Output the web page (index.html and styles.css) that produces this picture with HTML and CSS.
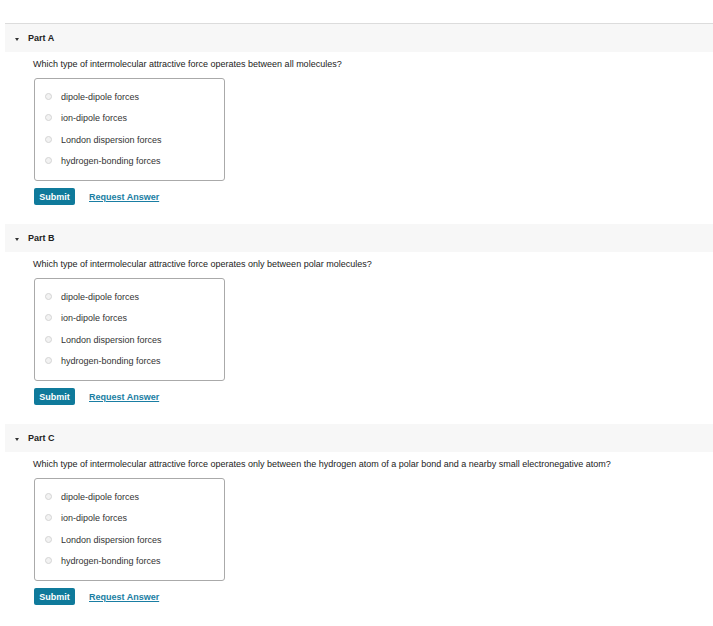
FILE: index.html
```html
<!DOCTYPE html>
<html>
<head>
<meta charset="utf-8">
<link rel="stylesheet" href="styles.css">
</head>
<body>
<div class="parts">
  <section class="part">
    <div class="part-head"><span class="caret"></span><span class="part-title">Part A</span></div>
    <div class="part-body">
      <p class="question">Which type of intermolecular attractive force operates between all molecules?</p>
      <div class="choices">
        <label class="choice"><span class="radio"></span>dipole-dipole forces</label>
        <label class="choice"><span class="radio"></span>ion-dipole forces</label>
        <label class="choice"><span class="radio"></span>London dispersion forces</label>
        <label class="choice"><span class="radio"></span>hydrogen-bonding forces</label>
      </div>
      <div class="actions"><button class="submit">Submit</button><a class="request" href="#">Request Answer</a></div>
    </div>
  </section>
  <section class="part">
    <div class="part-head"><span class="caret"></span><span class="part-title">Part B</span></div>
    <div class="part-body">
      <p class="question">Which type of intermolecular attractive force operates only between polar molecules?</p>
      <div class="choices">
        <label class="choice"><span class="radio"></span>dipole-dipole forces</label>
        <label class="choice"><span class="radio"></span>ion-dipole forces</label>
        <label class="choice"><span class="radio"></span>London dispersion forces</label>
        <label class="choice"><span class="radio"></span>hydrogen-bonding forces</label>
      </div>
      <div class="actions"><button class="submit">Submit</button><a class="request" href="#">Request Answer</a></div>
    </div>
  </section>
  <section class="part">
    <div class="part-head"><span class="caret"></span><span class="part-title">Part C</span></div>
    <div class="part-body">
      <p class="question">Which type of intermolecular attractive force operates only between the hydrogen atom of a polar bond and a nearby small electronegative atom?</p>
      <div class="choices">
        <label class="choice"><span class="radio"></span>dipole-dipole forces</label>
        <label class="choice"><span class="radio"></span>ion-dipole forces</label>
        <label class="choice"><span class="radio"></span>London dispersion forces</label>
        <label class="choice"><span class="radio"></span>hydrogen-bonding forces</label>
      </div>
      <div class="actions"><button class="submit">Submit</button><a class="request" href="#">Request Answer</a></div>
    </div>
  </section>
</div>
</body>
</html>
```
FILE: styles.css
```css
html, body {
  margin: 0;
  padding: 0;
  background: #fff;
}
body {
  font-family: "Liberation Sans", Arial, Helvetica, sans-serif;
  font-size: 9px;
  color: #222;
}
.parts {
  margin-top: 23px;
  margin-left: 5px;
  border-top: 1px solid #dcdcdc;
}
.part {
  display: flex;
  flex-direction: column;
}
.part-head {
  height: 28px;
  background: #f7f7f7;
  display: flex;
  align-items: center;
}
.caret {
  width: 0;
  height: 0;
  border-left: 2.5px solid transparent;
  border-right: 2.5px solid transparent;
  border-top: 3px solid #333;
  margin-left: 10px;
  margin-right: 9px;
  margin-top: 2px;
}
.part-title {
  font-weight: bold;
  font-size: 9px;
  color: #222;
}
.part-body {
  padding-left: 29px;
  padding-bottom: 19px;
}
.question {
  margin: 0 0 0 -1px;
  height: 26px;
  line-height: 24px;
  font-size: 9px;
  color: #222;
}
.choices {
  width: 189px;
  border: 1px solid #aaa;
  border-radius: 3px;
  padding: 7px 0 8px 0;
  display: flex;
  flex-direction: column;
}
.choice {
  height: 21.5px;
  display: flex;
  align-items: center;
  color: #333;
}
.radio {
  width: 5px;
  height: 5px;
  border-radius: 50%;
  border: 1px solid #d4d4d4;
  background: #f2f2f2;
  margin-left: 10px;
  margin-right: 9px;
  margin-top: -1px;
}
.actions {
  margin-top: 7px;
  display: flex;
  align-items: center;
}
.submit {
  height: 17px;
  width: 41px;
  padding: 0;
  border: none;
  border-radius: 2px;
  background: #0f7a9b;
  color: #fff;
  font-family: inherit;
  font-size: 9px;
  font-weight: bold;
}
.request {
  margin-left: 14px;
  color: #1a7ea3;
  font-weight: bold;
  font-size: 9px;
  text-decoration: underline;
}
```
